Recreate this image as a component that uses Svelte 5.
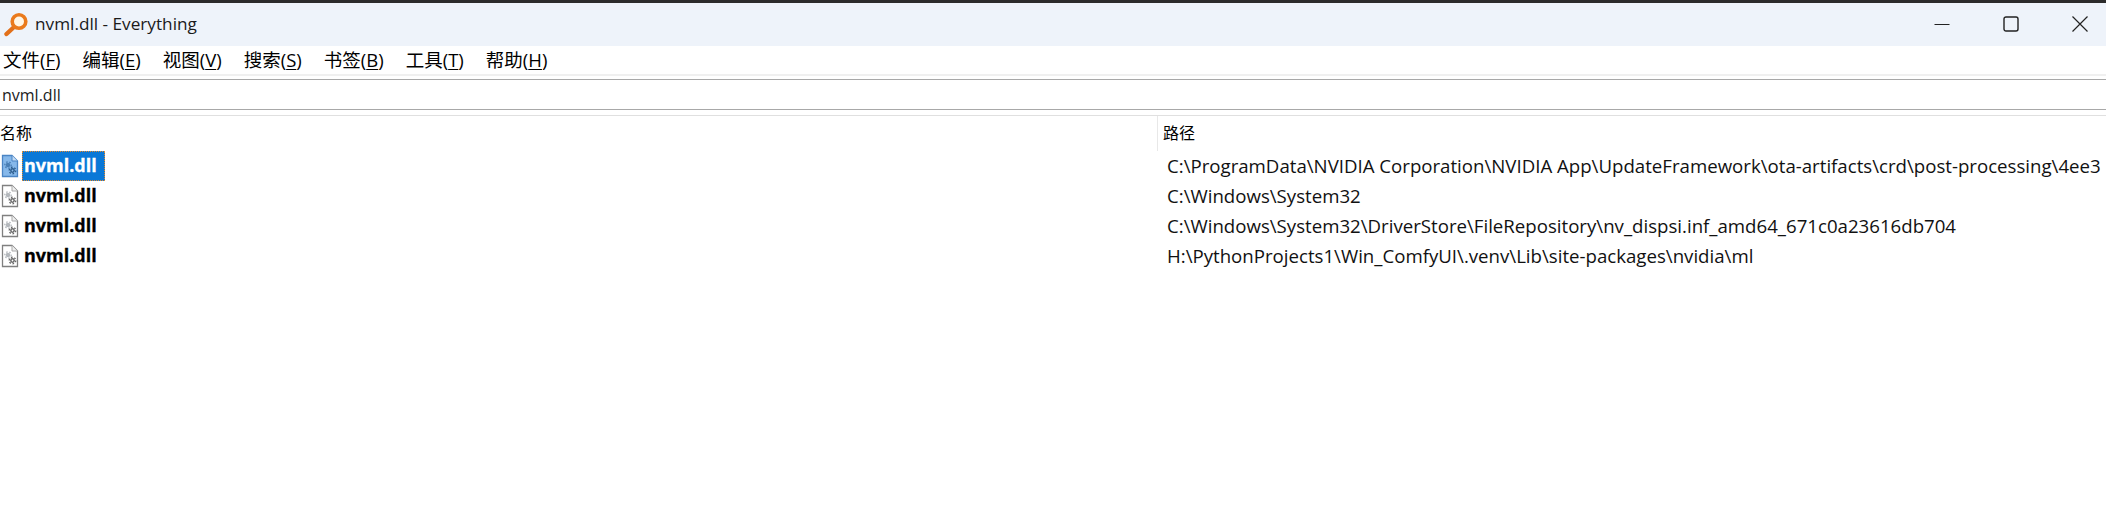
<script>
  const menus = [
    ['文件', 'F'], ['编辑', 'E'], ['视图', 'V'], ['搜索', 'S'],
    ['书签', 'B'], ['工具', 'T'], ['帮助', 'H']
  ];
  const rows = [
    'C:\\ProgramData\\NVIDIA Corporation\\NVIDIA App\\UpdateFramework\\ota-artifacts\\crd\\post-processing\\4ee3',
    'C:\\Windows\\System32',
    'C:\\Windows\\System32\\DriverStore\\FileRepository\\nv_dispsi.inf_amd64_671c0a23616db704',
    'H:\\PythonProjects1\\Win_ComfyUI\\.venv\\Lib\\site-packages\\nvidia\\ml'
  ];
</script>

<div class="win">
  <div class="topedge"></div>
  <header class="title">
    <svg class="logo" width="26" height="26" viewBox="0 0 26 26">
      <path d="M10.5 16.5 L3.5 23" stroke="#e2701a" stroke-width="4.4" stroke-linecap="round" fill="none"/>
      <circle cx="16" cy="10.5" r="6.8" fill="#fff6e6" stroke="#ea7a1c" stroke-width="3.6"/>
    </svg>
    <span class="title-text">nvml.dll - Everything</span>
    <div class="controls">
      <svg width="16" height="16" viewBox="0 0 16 16"><path d="M0.5 8.5H15.5" stroke="#222" stroke-width="1"/></svg>
      <svg width="16" height="16" viewBox="0 0 16 16"><rect x="1" y="1" width="14" height="14" rx="2" fill="none" stroke="#222" stroke-width="1.4"/></svg>
      <svg width="16" height="16" viewBox="0 0 16 16"><path d="M0.5 0.5L15.5 15.5M15.5 0.5L0.5 15.5" stroke="#222" stroke-width="1.2"/></svg>
    </div>
  </header>
  <nav class="menu">
    {#each menus as [name, key]}
      <span class="item">{name}(<u>{key}</u>)</span>
    {/each}
  </nav>
  <div class="menu-rule"></div>
  <div class="search">nvml.dll</div>
  <div class="cols">
    <div class="col-name">名称</div>
    <div class="col-path">路径</div>
  </div>
  <div class="list">
    {#each rows as path, i}
      <div class="row">
        <div class="name">
          <svg class="file" width="20" height="24" viewBox="0 0 20 24">
            <path d="M2.5 1.5H12L17.5 7V22.5H2.5Z" fill={i === 0 ? '#86b8ea' : '#fff'} stroke={i === 0 ? '#4a84c4' : '#808080'} stroke-width="1.3"/>
            <path d="M12 1.5V7H17.5" fill={i === 0 ? '#c4dcf4' : '#efefef'} stroke={i === 0 ? '#4a84c4' : '#a8a8a8'} stroke-width="1"/>
            <circle cx="8" cy="11" r="2.3" fill={i === 0 ? '#4a7fb5' : '#b4b8bc'}/>
            <circle cx="8" cy="11" r="3.2" fill="none" stroke={i === 0 ? '#4a7fb5' : '#b4b8bc'} stroke-width="1.3" stroke-dasharray="1.6 1.6"/>
            <circle cx="12.5" cy="16.5" r="2.4" fill={i === 0 ? '#2c5c8c' : '#686868'}/>
            <circle cx="12.5" cy="16.5" r="3.3" fill="none" stroke={i === 0 ? '#2c5c8c' : '#686868'} stroke-width="1.3" stroke-dasharray="1.7 1.7"/>
            <circle cx="12.5" cy="16.5" r="0.9" fill={i === 0 ? '#86b8ea' : '#fff'}/>
          </svg>
          <span class="fname" class:selected={i === 0}>nvml.dll</span>
        </div>
        <div class="path">{path}</div>
      </div>
    {/each}
  </div>
</div>

<style>
  :global(body) {
    margin: 0;
    background: #fff;
    overflow: hidden;
  }
  .win {
    width: 2106px;
    height: 528px;
    overflow: hidden;
    background: #fff;
    color: #000;
    font-family: "Open Sans", "Noto Sans CJK SC", sans-serif;
    display: flex;
    flex-direction: column;
  }
  .topedge { height: 3px; background: #2b2b2b; flex: none; }
  .title {
    height: 43px;
    flex: none;
    background: #eef3fa;
    display: flex;
    align-items: center;
    padding-left: 3px;
    padding-bottom: 2px;
    box-sizing: border-box;
    gap: 6px;
  }
  .title-text { font-size: 17.2px; color: #1a1a1a; }
  .controls {
    margin-left: auto;
    display: flex;
    gap: 53px;
    padding-right: 18px;
    align-items: center;
  }
  .menu {
    height: 28px;
    flex: none;
    display: flex;
    align-items: center;
    gap: 22px;
    padding-left: 3px;
    padding-bottom: 2px;
    font-size: 18.5px;
    box-sizing: border-box;
  }
  .item u { text-underline-offset: 2px; }
  .menu-rule { flex: none; height: 2px; background: #f0f0f0; }
  .search {
    flex: none;
    height: 30px;
    margin-top: 3px;
    border-top: 1px solid #a8a8a8;
    box-sizing: border-box;
    display: flex;
    align-items: center;
    padding-left: 2px;
    font-size: 16px;
    color: #222;
  }
  .cols {
    flex: none;
    height: 42px;
    box-sizing: border-box;
    border-top: 1px solid #a8a8a8;
    display: flex;
    font-size: 16px;
    position: relative;
  }
  .cols::before {
    content: "";
    position: absolute;
    left: 0;
    right: 0;
    top: 5px;
    height: 1px;
    background: #e0e0e0;
  }
  .col-name {
    width: 1158px;
    height: 35px;
    margin-top: 6px;
    padding-top: 4px;
    box-sizing: border-box;
    border-right: 1px solid #e8e8e8;
  }
  .col-path { padding: 10px 0 0 5px; }
  .list { display: flex; flex-direction: column; }
  .row { height: 30px; display: flex; align-items: center; }
  .name { width: 1167px; flex: none; display: flex; align-items: center; box-sizing: border-box; }
  .file { flex: none; }
  .fname {
    margin-left: 2px;
    padding: 0 7px 0 1px;
    height: 30px;
    line-height: 27px;
    font-size: 18px;
    font-weight: 700;
    -webkit-text-stroke: 0.3px currentColor;
    box-sizing: border-box;
    border: 1px dotted transparent;
  }
  .fname.selected {
    background: #0a78d7;
    color: #fff;
    border: 1px dotted #e08a30;
  }
  .path { white-space: nowrap; font-size: 18.65px; color: #111; padding-bottom: 2px; }
</style>
